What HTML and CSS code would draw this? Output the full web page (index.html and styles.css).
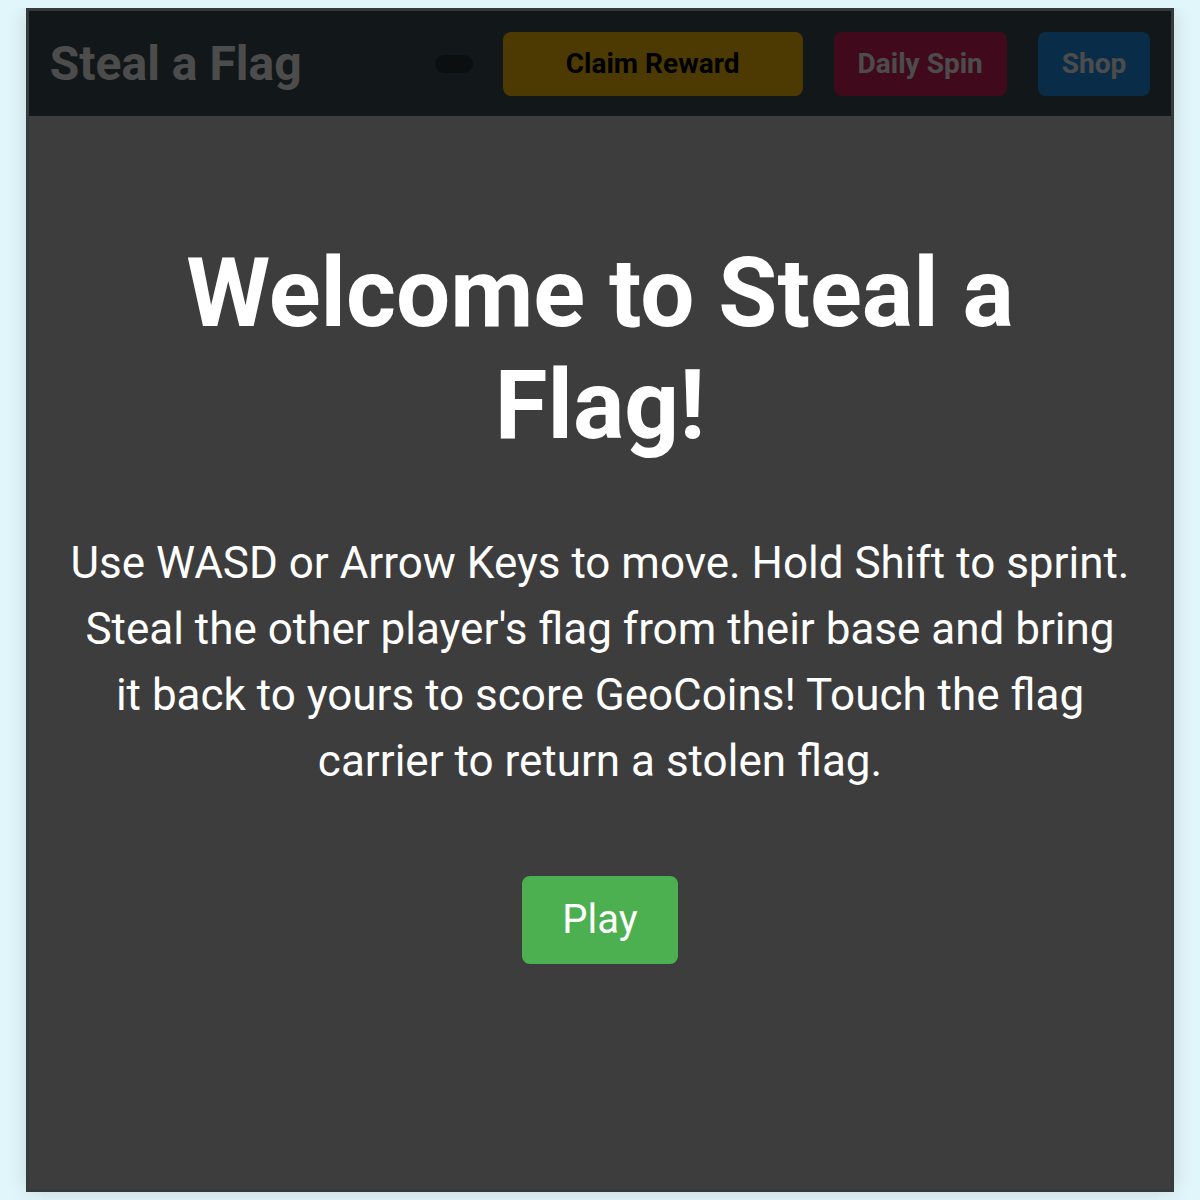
FILE: index.html
```html
<!DOCTYPE html>
<html lang="en">
<head>
<meta charset="utf-8"/>
<meta content="width=device-width, initial-scale=1" name="viewport"/>
<title>Steal a Flag</title>
<link rel="stylesheet" href="styles.css">
</head>
<body>
<div class="game-container">
  <header class="top-bar">
    <h1 class="logo">Steal a Flag</h1>
    <div class="controls">
      <span class="theme-toggle"></span>
      <button class="btn btn-reward">Claim Reward</button>
      <button class="btn btn-spin">Daily Spin</button>
      <button class="btn btn-shop">Shop</button>
    </div>
  </header>
  <main class="arena"></main>

  <!-- welcome screen sits over the whole game -->
  <div class="overlay">
    <h2 class="welcome-title">Welcome to Steal a Flag!</h2>
    <p class="welcome-text">Use WASD or Arrow Keys to move. Hold Shift to sprint. Steal the other player's flag from their base and bring it back to yours to score GeoCoins! Touch the flag carrier to return a stolen flag.</p>
    <button class="play-btn">Play</button>
  </div>
</div>
</body>
</html>
```

FILE: styles.css
```css
html, body {
  height: 100%;
}
body {
  font-family: Roboto, 'Liberation Sans', sans-serif;
  background-color: #e1f6fa;
  margin: 8px;
  padding: 0;
}
.game-container {
  position: relative;
  width: 97%;
  height: calc(100vh - 16px);
  margin: 0 auto;
  box-sizing: border-box;
  border: 3px solid #353a3b;
  box-shadow: 0 0 20px rgba(0, 0, 0, 0.12);
  display: flex;
  flex-direction: column;
  overflow: hidden;
}
.top-bar {
  background-color: #3d5055;
  display: flex;
  align-items: center;
  padding: 21px 21px 20px 21px;
}
.logo {
  margin: 0;
  font-size: 48px;
  font-weight: 700;
  color: #fff;
  line-height: 56px;
}
.controls {
  margin-left: auto;
  display: flex;
  align-items: center;
  gap: 31px;
}
.theme-toggle {
  width: 38px;
  height: 18px;
  border-radius: 9px;
  background-color: #263436;
  margin-right: -1px;
}
.btn {
  font-family: inherit;
  font-size: 28px;
  font-weight: 700;
  line-height: 32px;
  padding: 16px 24px;
  border: none;
  border-radius: 8px;
  color: #fff;
  cursor: pointer;
}
.btn-reward {
  min-width: 300px;
  background-color: #ffc107;
  color: #000;
}
.btn-spin {
  background-color: #d9215f;
}
.btn-shop {
  background-color: #2196f3;
}
.arena {
  flex: 1;
  background-color: #cbcbcb;
}
.overlay {
  position: absolute;
  inset: 0;
  background-color: rgba(0, 0, 0, 0.7);
  display: flex;
  flex-direction: column;
  align-items: center;
  justify-content: center;
  padding: 0 40px;
  text-align: center;
  color: #fff;
}
.welcome-title {
  max-width: 1000px;
  margin: 0 0 68px;
  font-size: 96px;
  font-weight: 700;
  line-height: 1.172;
}
.welcome-text {
  margin: 0 0 82px;
  font-size: 44px;
  line-height: 66px;
}
.play-btn {
  font-family: inherit;
  font-size: 40px;
  line-height: 48px;
  padding: 20px 40px;
  border: none;
  border-radius: 8px;
  background-color: #4caf50;
  color: #fff;
  cursor: pointer;
}
```
